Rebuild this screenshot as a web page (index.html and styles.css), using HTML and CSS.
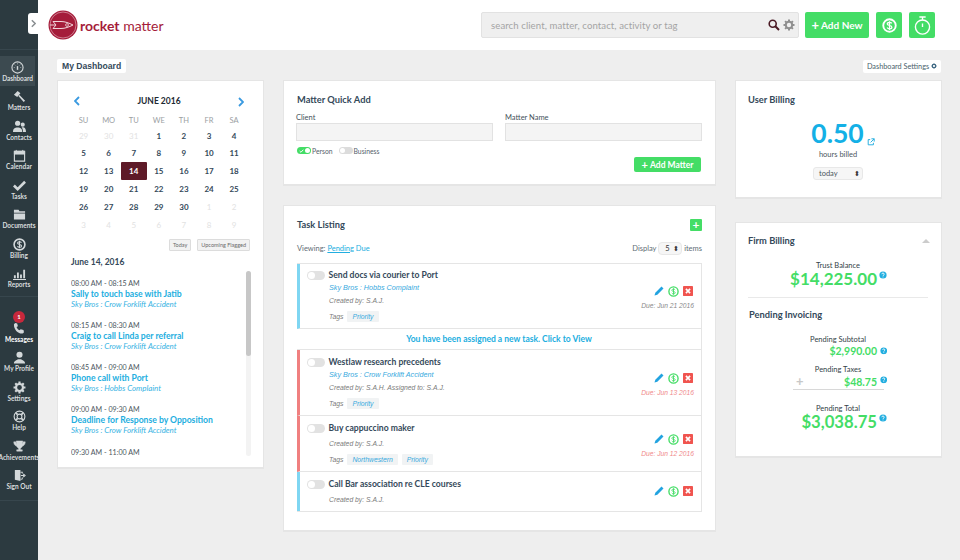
FILE: index.html
```html
<!DOCTYPE html>
<html lang="en">
<head>
<meta charset="utf-8">
<title>Rocket Matter</title>
<link rel="stylesheet" href="styles.css">
</head>
<body>
<svg class="defs" width="0" height="0">
  <symbol id="i-pencil" viewBox="0 0 12 12"><path d="M9 .6l2.400 2.400-7.400 7.400L.6 11.400l1-3.400z" fill="currentColor"/></symbol>
  <symbol id="i-dollar" viewBox="0 0 12 12"><circle cx="6" cy="6" r="5" fill="none" stroke="currentColor" stroke-width="1.500"/><path d="M7.800 4.300C7.400 3.600 6.700 3.400 6 3.400c-1 0-1.800.5-1.800 1.300C4.200 6.500 7.900 5.500 7.900 7.300c0 .8-.9 1.300-1.900 1.300-.8 0-1.500-.3-1.900-1M6 2.500v7" fill="none" stroke="currentColor" stroke-width="1"/></symbol>
  <symbol id="i-x" viewBox="0 0 12 12"><rect width="12" height="12" rx="1" fill="currentColor"/><path d="M3.500 3.500l5 5M8.500 3.500l-5 5" stroke="#fff" stroke-width="2"/></symbol>
  <symbol id="i-q" viewBox="0 0 10 10"><circle cx="5" cy="5" r="4.500" fill="currentColor"/><path d="M3.500 4c0-2 3-2 3 0 0 1.200-1.500 1-1.500 2.200M5 7v1" fill="none" stroke="#fff" stroke-width="1.100"/></symbol>
  <symbol id="i-gear" viewBox="0 0 12 12"><circle cx="6" cy="6" r="3.200" fill="none" stroke="currentColor" stroke-width="2"/><path d="M6 .5v2M6 9.500v2M.5 6h2M9.500 6h2M2.100 2.100l1.500 1.500M8.400 8.400l1.500 1.500M9.900 2.100L8.400 3.600M3.600 8.400L2.100 9.900" stroke="currentColor" stroke-width="2"/></symbol>
</svg>

<aside class="sidebar">
  <div class="side-top"><span class="collapse"><svg viewBox="0 0 6 10" class="collapse-arrow"><path d="M1 1l4 4-4 4" fill="none" stroke="#8a8f92" stroke-width="1.800"/></svg></span></div>
  <nav class="nav-group nav-main">
    <a class="nav-item active"><svg class="nav-icon" viewBox="0 0 14 14"><circle cx="7" cy="7" r="6" fill="none" stroke="currentColor" stroke-width="1.200"/><path d="M7 5.500v4" stroke="currentColor" stroke-width="1.500"/><path d="M7 2.500v1M3 7h1M10 7h1M4 4l.7.7M10 4l-.7.7" stroke="currentColor" stroke-width=".7"/></svg><span>Dashboard</span></a>
    <a class="nav-item"><svg class="nav-icon" viewBox="0 0 14 14"><path d="M1 5l4-4 3 2.500-3.500 4zM5.800 6.500l1.200-1.200 6 6.200-1.500 1.500z" fill="currentColor"/></svg><span>Matters</span></a>
    <a class="nav-item"><svg class="nav-icon" viewBox="0 0 14 14"><circle cx="5" cy="3.500" r="2.800" fill="currentColor"/><circle cx="10.500" cy="5" r="2.200" fill="currentColor"/><path d="M0 13c0-4 2-5 5-5s5 1 5 5zM10.800 13c0-2-.5-4-1.500-5 2.500-.5 4.700.5 4.700 5z" fill="currentColor"/></svg><span>Contacts</span></a>
    <a class="nav-item"><svg class="nav-icon" viewBox="0 0 14 14"><path d="M1.500 2.500h11v10.500h-11z" fill="none" stroke="currentColor" stroke-width="1.200"/><path d="M1.500 2.500h11v3h-11zM3.500 1v2M10.500 1v2" fill="currentColor" stroke="currentColor"/></svg><span>Calendar</span></a>
    <a class="nav-item"><svg class="nav-icon" viewBox="0 0 14 14"><path d="M1 7l4 4 8-8" fill="none" stroke="currentColor" stroke-width="2.800"/></svg><span>Tasks</span></a>
    <a class="nav-item"><svg class="nav-icon" viewBox="0 0 14 14"><path d="M1 2h5l1 1.500h6V5H1zM1 6h12v6.500H1z" fill="currentColor"/></svg><span>Documents</span></a>
    <a class="nav-item"><svg class="nav-icon" viewBox="0 0 12 12"><use href="#i-dollar"/></svg><span>Billing</span></a>
    <a class="nav-item"><svg class="nav-icon" viewBox="0 0 14 14"><path d="M1 9h2v3H1zM4.300 6h2v6h-2zM7.600 8h2v4h-2zM11 3h2v9h-2zM0 13h14v1H0z" fill="currentColor"/></svg><span>Reports</span></a>
  </nav>
  <nav class="nav-group nav-second">
    <a class="nav-item nav-msg"><span class="badge">1</span><svg class="nav-icon" viewBox="0 0 14 14"><path d="M2.500 1l2 .5.8 3-1.500 1c.6 1.500 1.700 2.800 3.200 3.500l1.300-1.300 3 .8.500 2.500c-.5.800-1.300 1.500-2.300 1.500C5 12.500 1 8 1 3c0-.8.700-1.500 1.500-2z" fill="currentColor"/></svg><span>Messages</span></a>
    <a class="nav-item"><svg class="nav-icon" viewBox="0 0 14 14"><circle cx="7" cy="4" r="3.300" fill="currentColor"/><path d="M1 13.500c0-3 3-3.500 4.500-4.500h3c1.500 1 4.500 1.500 4.500 4.500z" fill="currentColor"/></svg><span>My Profile</span></a>
    <a class="nav-item"><svg class="nav-icon" viewBox="0 0 12 12"><use href="#i-gear"/></svg><span>Settings</span></a>
    <a class="nav-item"><svg class="nav-icon" viewBox="0 0 14 14"><circle cx="7" cy="7" r="5.800" fill="none" stroke="currentColor" stroke-width="1.200"/><circle cx="7" cy="7" r="2.600" fill="none" stroke="currentColor" stroke-width="1.200"/><path d="M3 3l2 2M11 3L9 5M3 11l2-2M11 11L9 9" stroke="currentColor" stroke-width="2"/></svg><span>Help</span></a>
    <a class="nav-item"><svg class="nav-icon" viewBox="0 0 14 14"><path d="M3.500 1h7v4c0 2-1.500 3.500-2.500 3.800V10.500h2V12H4v-1.500h2V8.800C5 8.500 3.500 7 3.500 5zM3 2H.8c0 2.500 1 4 3 4.500M11 2h2.200c0 2.500-1 4-3 4.500" fill="currentColor" stroke="currentColor" stroke-width=".5"/></svg><span>Achievements</span></a>
    <a class="nav-item"><svg class="nav-icon" viewBox="0 0 14 14"><path d="M2 1h6v12l-6-1.500z" fill="currentColor"/><path d="M8 3.500h2M8 11h2M10 3v2M10 9v2" stroke="currentColor"/><path d="M8.500 7h3.500M11 5.200L13 7l-2 1.800" fill="none" stroke="currentColor" stroke-width="1.200"/></svg><span>Sign Out</span></a>
  </nav>
</aside>

<div class="page">
  <header class="topbar">
    <div class="logo">
      <svg class="logo-mark" viewBox="0 0 30 30"><circle cx="15" cy="15" r="14.500" fill="#a51c3a"/><circle cx="15" cy="15" r="13" fill="none" stroke="#e6bcc6" stroke-width=".6"/><path d="M2 15h5M5 11.500h8c4 0 8 1.500 12 3.500-4 2-8 3.500-12 3.500H5l3-3.500z" fill="none" stroke="#f0d5db" stroke-width="1"/><circle cx="19" cy="15" r="1.400" fill="none" stroke="#f0d5db" stroke-width=".8"/></svg>
      <span class="logo-text"><b>rocket</b> matter</span>
    </div>
    <div class="top-actions">
      <div class="search">
        <span class="search-text">search client, matter, contact, activity or tag</span>
        <svg class="search-glass" viewBox="0 0 12 12"><circle cx="4.700" cy="4.700" r="3.500" fill="none" stroke="#4b1a24" stroke-width="1.600"/><path d="M7.300 7.300l3.700 3.700" stroke="#4b1a24" stroke-width="2"/></svg>
        <svg class="search-gear"><use href="#i-gear"/></svg>
      </div>
      <a class="btn-green btn-add"><span class="plus-sign">+</span>Add New</a>
      <a class="btn-green btn-square"><svg class="btn-dollar"><use href="#i-dollar"/></svg></a>
      <a class="btn-green btn-square btn-timer"><svg class="btn-watch" viewBox="0 0 16 18"><circle cx="8" cy="10.500" r="6.700" fill="none" stroke="currentColor" stroke-width="1.300"/><path d="M5 1h6M8 1v3M8 7v3.500" fill="none" stroke="currentColor" stroke-width="1.300"/></svg></a>
    </div>
  </header>

  <div class="content">
    <div class="tabs-row">
      <span class="tab">My Dashboard</span>
      <span class="settings">Dashboard Settings <svg class="settings-gear"><use href="#i-gear"/></svg></span>
    </div>
    <div class="columns">
      <section class="card cal-card">
        <div class="cal-head">
          <svg class="cal-arrow" viewBox="0 0 6 10"><path d="M5 1L1 5l4 4" fill="none" stroke="currentColor" stroke-width="1.800"/></svg>
          <span class="cal-title">JUNE 2016</span>
          <svg class="cal-arrow cal-next" viewBox="0 0 6 10"><path d="M1 1l4 4-4 4" fill="none" stroke="currentColor" stroke-width="1.800"/></svg>
        </div>
        <div class="cal-grid">
          <span class="dow">SU</span><span class="dow">MO</span><span class="dow">TU</span><span class="dow">WE</span><span class="dow">TH</span><span class="dow">FR</span><span class="dow">SA</span>
          <span class="off">29</span><span class="off">30</span><span class="off">31</span><span>1</span><span>2</span><span>3</span><span>4</span>
          <span>5</span><span>6</span><span>7</span><span>8</span><span>9</span><span>10</span><span>11</span>
          <span>12</span><span>13</span><span class="today">14</span><span>15</span><span>16</span><span>17</span><span>18</span>
          <span>19</span><span>20</span><span>21</span><span>22</span><span>23</span><span>24</span><span>25</span>
          <span>26</span><span>27</span><span>28</span><span>29</span><span>30</span><span class="off">1</span><span class="off">2</span>
          <span class="off">3</span><span class="off">4</span><span class="off">5</span><span class="off">6</span><span class="off">7</span><span class="off">8</span><span class="off">9</span>
        </div>
        <div class="cal-btns"><span class="mini-btn">Today</span><span class="mini-btn">Upcoming Flagged</span></div>
        <h3 class="day-title">June 14, 2016</h3>
        <div class="events-wrap">
          <div class="events">
            <div class="event"><div class="ev-time">08:00 AM - 08:15 AM</div><div class="ev-title">Sally to touch base with Jatib</div><div class="ev-sub">Sky Bros : Crow Forklift Accident</div></div>
            <div class="event"><div class="ev-time">08:15 AM - 08:30 AM</div><div class="ev-title">Craig to call Linda per referral</div><div class="ev-sub">Sky Bros : Crow Forklift Accident</div></div>
            <div class="event"><div class="ev-time">08:45 AM - 09:00 AM</div><div class="ev-title">Phone call with Port</div><div class="ev-sub">Sky Bros : Hobbs Complaint</div></div>
            <div class="event"><div class="ev-time">09:00 AM - 09:30 AM</div><div class="ev-title">Deadline for Response by Opposition</div><div class="ev-sub">Sky Bros : Crow Forklift Accident</div></div>
            <div class="event"><div class="ev-time">09:30 AM - 11:00 AM</div></div>
          </div>
          <div class="scroll"><div class="thumb"></div></div>
        </div>
      </section>

      <div class="col-mid">
        <section class="card quick-card">
          <h2 class="card-title">Matter Quick Add</h2>
          <div class="form-row">
            <label class="field"><span class="field-label">Client</span><span class="input"></span></label>
            <label class="field"><span class="field-label">Matter Name</span><span class="input"></span></label>
          </div>
          <div class="quick-foot">
            <div class="radios">
              <span class="sw-small on"><svg class="sw-check" viewBox="0 0 6 5"><path d="M.7 2.500l1.600 1.600L5.300.9" fill="none" stroke="#fff" stroke-width="1.200"/></svg></span><span class="radio-label">Person</span>
              <span class="sw-small"></span><span class="radio-label">Business</span>
            </div>
            <a class="btn-green btn-matter"><span class="plus-sign">+</span>Add Matter</a>
          </div>
        </section>

        <section class="card task-card">
          <div class="task-head"><h2 class="card-title">Task Listing</h2><span class="plus-btn">+</span></div>
          <div class="task-filter">
            <span class="view">Viewing: <a class="link-u">Pending</a> <a class="link">Due</a></span>
            <span class="display">Display <span class="select-mini">5 <em>⬍</em></span> items</span>
          </div>
          <div class="task-list">
            <article class="task blue t1">
              <div class="task-main">
                <div class="task-name"><span class="toggle"></span>Send docs via courier to Port</div>
                <div class="task-matter">Sky Bros : Hobbs Complaint</div>
                <div class="task-meta">Created by: S.A.J.</div>
                <div class="task-tags">Tags <span class="tag">Priority</span></div>
              </div>
              <div class="task-side">
                <div class="task-icons"><svg class="ti pen"><use href="#i-pencil"/></svg><svg class="ti dol"><use href="#i-dollar"/></svg><svg class="ti del"><use href="#i-x"/></svg></div>
                <div class="due">Due: Jun 21 2016</div>
              </div>
            </article>
            <div class="notice">You have been assigned a new task. Click to View</div>
            <article class="task red t1">
              <div class="task-main">
                <div class="task-name"><span class="toggle"></span>Westlaw research precedents</div>
                <div class="task-matter">Sky Bros : Crow Forklift Accident</div>
                <div class="task-meta">Created by: S.A.H. Assigned to: S.A.J.</div>
                <div class="task-tags">Tags <span class="tag">Priority</span></div>
              </div>
              <div class="task-side">
                <div class="task-icons"><svg class="ti pen"><use href="#i-pencil"/></svg><svg class="ti dol"><use href="#i-dollar"/></svg><svg class="ti del"><use href="#i-x"/></svg></div>
                <div class="due late">Due: Jun 13 2016</div>
              </div>
            </article>
            <article class="task red t3">
              <div class="task-main">
                <div class="task-name"><span class="toggle"></span>Buy cappuccino maker</div>
                <div class="task-meta">Created by: S.A.J.</div>
                <div class="task-tags">Tags <span class="tag">Northwestern</span> <span class="tag">Priority</span></div>
              </div>
              <div class="task-side">
                <div class="task-icons"><svg class="ti pen"><use href="#i-pencil"/></svg><svg class="ti dol"><use href="#i-dollar"/></svg><svg class="ti del"><use href="#i-x"/></svg></div>
                <div class="due late">Due: Jun 12 2016</div>
              </div>
            </article>
            <article class="task blue t4">
              <div class="task-main">
                <div class="task-name"><span class="toggle"></span>Call Bar association re CLE courses</div>
                <div class="task-meta">Created by: S.A.J.</div>
              </div>
              <div class="task-side">
                <div class="task-icons"><svg class="ti pen"><use href="#i-pencil"/></svg><svg class="ti dol"><use href="#i-dollar"/></svg><svg class="ti del"><use href="#i-x"/></svg></div>
              </div>
            </article>
          </div>
        </section>
      </div>

      <div class="col-right">
        <section class="card user-card">
          <h2 class="card-title">User Billing</h2>
          <div class="hours"><span class="hours-num">0.50</span><svg class="ext" viewBox="0 0 10 10"><path d="M8 6v2.500H1.500V2H4M5.500 1H9v3.500M9 1L4.500 5.500" fill="none" stroke="currentColor" stroke-width="1.200"/></svg></div>
          <div class="hours-label">hours billed</div>
          <span class="select-today">today <em>⬍</em></span>
        </section>
        <section class="card firm-card">
          <div class="firm-head"><h2 class="card-title">Firm Billing</h2><span class="caret"></span></div>
          <div class="stat-label trust-label">Trust Balance</div>
          <div class="stat big"><span>$14,225.00</span><svg class="q qb"><use href="#i-q"/></svg></div>
          <hr class="rule">
          <h2 class="card-title sub-title">Pending Invoicing</h2>
          <div class="stat-label sub-label">Pending Subtotal</div>
          <div class="stat mid"><span>$2,990.00</span><svg class="q"><use href="#i-q"/></svg></div>
          <div class="stat-label taxes-label">Pending Taxes</div>
          <div class="stat mid taxes"><i class="plus">+</i><span>$48.75</span><svg class="q"><use href="#i-q"/></svg></div>
          <div class="stat-label total-label">Pending Total</div>
          <div class="stat total"><span>$3,038.75</span><svg class="q qb"><use href="#i-q"/></svg></div>
        </section>
      </div>
    </div>
  </div>
</div>
</body>
</html>
```
FILE: styles.css
```css
* { box-sizing: border-box; }
html, body { margin: 0; height: 100%; overflow: hidden; }
body { display: flex; width: 960px; height: 560px; background: #eeeeee; font-family: Lato, "Liberation Sans", sans-serif; color: #34495a; }
.defs { position: absolute; }
h2, h3 { margin: 0; }
em, i { font-style: normal; }

.sidebar { width: 38px; flex: none; background: #2c3a40; color: #d8dcde; display: flex; flex-direction: column; }
.side-top { height: 50px; border-bottom: 1px solid #37464d; display: flex; justify-content: flex-end; padding-top: 13px; }
.collapse { width: 10px; height: 21px; background: #fff; border-radius: 3px 0 0 3px; display: flex; align-items: center; justify-content: center; }
.collapse-arrow { width: 5px; height: 9px; }
.nav-group { display: flex; flex-direction: column; }
.nav-main { padding-top: 6px; height: 247px; border-bottom: 1px solid #37464d; }
.nav-second { padding-top: 20px; height: 204px; border-bottom: 1px solid #37464d; }
.nav-item { position: relative; height: 29.500px; flex: none; display: flex; flex-direction: column; align-items: center; justify-content: flex-end; font-size: 6.500px; font-weight: 700; line-height: 9px; white-space: nowrap; padding-bottom: 3px; width: 38px; }
.nav-item.active { background: #3c4a50; width: 35px; }
.nav-icon { width: 13px; height: 13px; margin-bottom: 0; color: #d3d8da; }
.nav-item.active span { letter-spacing: -.1px; }
.badge { position: absolute; top: -6px; left: 13px; width: 12px; height: 12px; border-radius: 50%; background: #c8283c; color: #fff; font-size: 6px; line-height: 12px; text-align: center; }
.nav-msg > span:last-child { color: #fff; }

.page { flex: 1; min-width: 0; display: flex; flex-direction: column; }
.topbar { height: 50px; flex: none; background: #fff; display: flex; justify-content: space-between; padding: 10px 25px 0 10px; }
.logo { display: flex; align-items: center; height: 30px; gap: 2px; }
.logo-mark { width: 30px; height: 30px; }
.logo-text { font-size: 14px; font-weight: 400; color: #a51c3a; }
.logo-text b { font-weight: 700; }
.top-actions { display: flex; gap: 6px; height: 26px; margin-top: 2px; }
.search { width: 318px; background: #efefef; border: 1px solid #e2e2e2; border-radius: 2px; display: flex; align-items: center; padding: 0 3px 0 9px; }
.search-text { flex: 1; font-size: 9.600px; color: #a4a4a4; letter-spacing: .08px; }
.search-glass { width: 12px; height: 12px; }
.search-gear { width: 12px; height: 12px; color: #8f8f8f; margin-left: 3px; }
.btn-green { background: #44dd66; color: #fff; border-radius: 2px; display: flex; align-items: center; justify-content: center; font-weight: 700; }
.plus-sign { font-size: 1.300em; line-height: 1; margin-right: 2px; }
.btn-add { width: 64px; font-size: 10px; }
.btn-square { width: 26px; margin-left: 1px; }
.btn-dollar { width: 15px; height: 15px; }
.btn-watch { width: 17px; height: 19px; }

.content { flex: 1; padding: 9px 19px 0 19px; }
.tabs-row { display: flex; justify-content: space-between; align-items: center; height: 14px; margin-bottom: 8px; }
.tab { background: #fff; height: 14px; padding: 0 5px; border-radius: 2px; font: 700 8.600px/14px "Liberation Sans", sans-serif; color: #34495a; }
.settings { background: #fff; height: 13px; padding: 0 4px; border-radius: 2px; font-size: 7.300px; line-height: 13px; color: #4b5f6c; display: flex; align-items: center; white-space: pre; }
.settings-gear { width: 6px; height: 6px; color: #34607d; }

.columns { display: grid; grid-template-columns: 207px 433px 207px; gap: 19px; align-items: start; margin-top: -1px; }
.col-mid, .col-right { display: flex; flex-direction: column; }
.card { background: #fff; border: 1px solid #e5e5e5; border-bottom-width: 2px; }
.card-title { font-size: 9.300px; font-weight: 700; color: #34495a; line-height: 12px; }

.cal-card { height: 389px; padding: 13px 14px 0 13px; }
.cal-head { display: flex; align-items: center; justify-content: space-between; padding: 0 5px 0 3px; height: 14px; color: #3a9ae0; }
.cal-arrow { width: 6px; height: 10px; }
.cal-next { position: relative; top: 1px; }
.cal-title { font-size: 8.500px; font-weight: 700; color: #1d2a33; }
.cal-grid { display: grid; grid-template-columns: repeat(7, 25.100px); grid-auto-rows: 17.800px; justify-items: center; align-items: center; margin-top: 1px; font-size: 8px; font-weight: 700; color: #34495a; }
.dow { color: #9ba0a3; font-weight: 400; font-size: 7.500px; height: 13px; line-height: 13px; align-self: end; }
.off { color: #e2e2e2; font-weight: 400; }
.today { width: 26px; height: 18px; line-height: 18px; background: #5e1a28; color: #fff; text-align: center; border-radius: 1px; }
.cal-btns { display: flex; justify-content: flex-end; gap: 6px; margin: 5px -1px 0 0; }
.mini-btn { height: 12px; padding: 0 3px; background: #f2f2f2; border: 1px solid #dcdcdc; border-radius: 1px; font-size: 5.500px; line-height: 10px; color: #6b6b6b; }
.day-title { font-size: 8.500px; font-weight: 700; color: #34495a; margin-top: 5px; line-height: 12px; }
.events-wrap { display: flex; justify-content: space-between; height: 188px; margin-right: -2px; overflow: hidden; }
.events { flex: 1; padding-top: 10px; }
.event { height: 42.300px; }
.ev-time { font-size: 7.100px; line-height: 11px; color: #4c5760; }
.ev-title { font-size: 8.600px; line-height: 11px; color: #22aee0; font-weight: 700; white-space: nowrap; }
.ev-sub { font-size: 7.900px; line-height: 9px; font-style: italic; color: #37b3e3; white-space: nowrap; }
.scroll { width: 5px; height: 185px; margin-top: 3px; background: #f3f3f3; border-radius: 3px; flex: none; }
.thumb { height: 85px; background: #c7c7c7; border-radius: 3px; }

.quick-card { height: 106px; padding: 13px 13px 0 13px; }
.form-row { display: grid; grid-template-columns: 197px 197px; gap: 12px; margin: 7px 0 0 -1px; }
.field { display: flex; flex-direction: column; }
.field-label { font-size: 7.500px; line-height: 10px; color: #44515b; }
.input { height: 18px; background: #f4f4f4; border: 1px solid #e2e2e2; }
.quick-foot { display: flex; justify-content: space-between; align-items: flex-start; margin-top: 5px; }
.radios { display: flex; align-items: center; height: 9px; }
.sw-small { position: relative; width: 14px; height: 7px; border-radius: 4px; background: #dcdcdc; }
.sw-small::after { content: ""; position: absolute; left: 1px; top: 1px; width: 5px; height: 5px; border-radius: 50%; background: #fff; }
.sw-small.on { background: #44dd66; }
.sw-small.on::after { left: 8px; }
.sw-check { position: absolute; left: 2px; top: 1.500px; width: 5px; height: 4px; }
.radio-label { font-size: 6.800px; color: #55626b; margin: 0 6px 0 1px; }
.btn-matter { width: 67px; height: 15px; margin: 11px 1px 0 0; font-size: 8.500px; }

.task-card { height: 327px; margin-top: 19px; padding: 13px 13px 0 13px; }
.task-head { display: flex; justify-content: space-between; align-items: flex-start; }
.plus-btn { width: 12px; height: 12px; background: #44dd66; border-radius: 1px; color: #fff; font-size: 12px; font-weight: 700; line-height: 12px; text-align: center; }
.task-filter { display: flex; justify-content: space-between; align-items: center; height: 14px; margin-top: 10px; font-size: 7.500px; color: #626d75; }
.link-u { color: #22aee0; text-decoration: underline; }
.link { color: #22aee0; }
.display { display: flex; align-items: center; white-space: pre; }
.select-mini { width: 24px; height: 13px; background: #f6f6f6; border: 1px solid #e8e8e8; border-radius: 4px; display: flex; align-items: center; justify-content: space-between; padding: 0 2px 0 6px; color: #333; }
.select-mini em, .select-today em { font-size: 7px; color: #333; }
.task-list { margin-top: 8px; border: 1px solid #e5e5e5; border-left: 0; }
.task { display: flex; justify-content: space-between; border-left: 3px solid; border-bottom: 1px solid #e5e5e5; padding: 5px 7px 0 7px; }
.task:last-child { border-bottom: 0; }
.blue { border-left-color: #7fd6f2; }
.red { border-left-color: #f08080; }
.t1 { height: 66px; }
.t3 { height: 56px; }
.t4 { height: 39px; }
.task:first-child { height: 65px; padding-top: 4px; }
.notice { height: 21px; border-bottom: 1px solid #e5e5e5; text-align: center; font-size: 8.500px; line-height: 20px; font-weight: 700; color: #22aee0; }
.task-name { display: flex; align-items: center; gap: 3.500px; height: 14px; font-size: 8.600px; font-weight: 700; color: #34495a; white-space: nowrap; }
.toggle { width: 18px; height: 9px; border-radius: 5px; background: #e2e2e2; position: relative; flex: none; }
.toggle::before { content: ""; position: absolute; left: 1px; top: 1px; width: 7px; height: 7px; border-radius: 50%; background: #fff; }
.task-matter { margin: 1px 0 0 22px; font-size: 7.200px; line-height: 9px; font-style: italic; color: #37a9de; font-family: "Liberation Sans", sans-serif; }
.task-meta { margin: 4px 0 0 22px; font-size: 6.800px; line-height: 9px; font-style: italic; color: #7a7a7a; font-family: "Liberation Sans", sans-serif; }
.task-tags { margin: 6px 0 0 22px; font-size: 6.800px; line-height: 11px; font-style: italic; color: #7a7a7a; font-family: "Liberation Sans", sans-serif; }
.tag { display: inline-block; background: #f1f3f4; color: #37a9de; padding: 0 5px; margin-left: 2px; border-radius: 1px; }
.task-side { display: flex; flex-direction: column; align-items: flex-end; padding-top: 17.500px; }
.t3 .task-side { padding-top: 12.500px; }
.t4 .task-side { padding-top: 8.500px; }
.task-icons { display: flex; align-items: center; gap: 4px; height: 11px; margin-right: 1px; }
.ti { width: 10px; height: 10px; }
.pen { color: #22a3e0; }
.dol { color: #44dd66; width: 11px; height: 11px; }
.del { color: #f0544f; }
.due { font-size: 6.700px; line-height: 9px; margin-top: 4.700px; font-style: italic; color: #8a8a8a; font-family: "Liberation Sans", sans-serif; }
.due.late { color: #f08a8a; }

.user-card { height: 119px; padding: 13px 13px 0 12px; text-align: center; display: flex; flex-direction: column; align-items: center; }
.user-card .card-title { align-self: flex-start; }
.hours { position: relative; margin: 12px 0 0 -1px; height: 30px; line-height: 30px; }
.hours-num { font-size: 26.500px; font-weight: 700; color: #14b0e6; }
.ext { position: absolute; left: 100%; bottom: 2px; margin-left: 3px; width: 8px; height: 8px; color: #22aee0; }
.hours-label { font-size: 7.500px; color: #4c5760; line-height: 10px; margin-top: 2px; }
.select-today { width: 50px; height: 13px; background: #f6f6f6; border: 1px solid #e8e8e8; border-radius: 3px; display: flex; justify-content: space-between; align-items: center; margin-top: 7px; padding: 0 2px 0 5px; font-size: 7.500px; color: #4c5760; }

.firm-card { height: 236px; margin-top: 23px; padding: 12px 13px 0 12px; text-align: center; }
.firm-head { display: flex; justify-content: space-between; align-items: center; text-align: left; height: 12px; }
.caret { width: 0; height: 0; border: 4px solid transparent; border-bottom-color: #ccc; border-top-width: 0; margin-right: -2px; }
.stat-label { height: 10px; padding-top: 1px; font-size: 7.500px; line-height: 10px; color: #333f48; }
.trust-label { margin-top: 13px; }
.sub-label { margin-top: 13px; }
.taxes-label { margin-top: 7px; }
.total-label { margin-top: 13px; }
.stat { position: relative; display: flex; align-items: center; justify-content: flex-end; color: #44dd66; font-weight: 700; padding-right: 51px; }
.stat.big { height: 17px; font-size: 17px; }
.stat.mid { height: 13px; font-size: 10.500px; }
.stat.total { height: 18px; font-size: 16.700px; }
.q { position: absolute; width: 7.500px; height: 7.500px; color: #22aee0; top: 3px; right: 41px; }
.qb { width: 8px; height: 8px; top: 1px; }
.rule { border: 0; border-top: 1px solid #e9e9e9; margin: 10px 0 0 0; }
.sub-title { text-align: left; margin: 11px 0 0 1px; }
.stat.taxes { margin: 0 44px 0 45px; padding-right: 7px; border-bottom: 1px solid #d8d8d8; height: 16px; }
.taxes .q { right: -3px; top: 2px; }
.plus { position: absolute; left: 3px; top: 0; font-size: 13px; line-height: 15px; font-weight: 700; color: #c8c8c8; }
```
